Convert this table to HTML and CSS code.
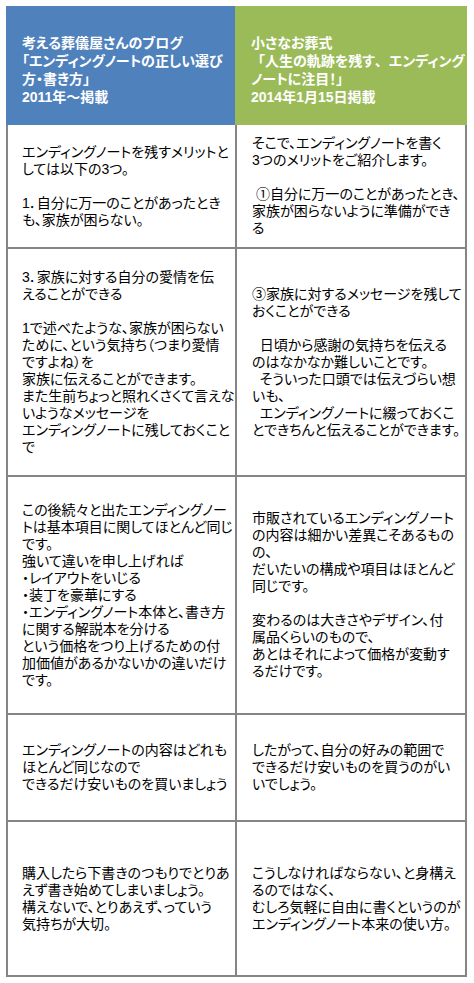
FILE: index.html
```html
<!DOCTYPE html>
<html lang="ja">
<head>
<meta charset="utf-8">
<title>エンディングノート比較</title>
<link rel="stylesheet" href="styles.css">
</head>
<body>
<table class="cmp">
  <colgroup><col class="c-left"><col class="c-right"></colgroup>
  <tr class="r-head">
    <th class="h h-blue">考える葬儀屋さんのブログ<br>「エンディングノートの正しい選び<br>方・書き方」<br>2011年～掲載</th>
    <th class="h h-green">小さなお葬式<br><span class="fw">「</span>人生の軌跡を残す<span class="fw">、</span>エンディング<br>ノートに注目！」<br>2014年1月15日掲載</th>
  </tr>
  <tr class="r1">
    <td class="b b-left">エンディングノートを残すメリットと<br>しては以下の3つ。<br><br>1．自分に万一のことがあったとき<br>も、家族が困らない。</td>
    <td class="b b-right">そこで、エンディングノートを書く<br>3つのメリットをご紹介します。<br><br>&nbsp;①自分に万一のことがあったとき、<br>家族が困らないように準備ができ<br>る</td>
  </tr>
  <tr class="r2">
    <td class="b b-left">3．家族に対する自分の愛情を伝<br>えることができる<br><br>1で述べたような、家族が困らない<br>ために、という気持ち（つまり愛情<br>ですよね）を<br>家族に伝えることができます。<br>また生前ちょっと照れくさくて言えな<br>いようなメッセージを<br>エンディングノートに残しておくこと<br>で</td>
    <td class="b b-right">③家族に対するメッセージを残して<br>おくことができる<br><br>&nbsp;&nbsp;日頃から感謝の気持ちを伝える<br>のはなかなか難しいことです。<br>&nbsp;&nbsp;そういった口頭では伝えづらい想<br>いも、<br>&nbsp;&nbsp;エンディングノートに綴っておくこ<br>とできちんと伝えることができます。</td>
  </tr>
  <tr class="r3">
    <td class="b b-left">この後続々と出たエンディングノー<br>トは基本項目に関してほとんど同じ<br>です。<br>強いて違いを申し上げれば<br>・レイアウトをいじる<br>・装丁を豪華にする<br>・エンディングノート本体と、書き方<br>に関する解説本を分ける<br>という価格をつり上げるための付<br>加価値があるかないかの違いだけ<br>です。</td>
    <td class="b b-right">市販されているエンディングノート<br>の内容は細かい差異こそあるもの<br>の、<br>だいたいの構成や項目はほとんど<br>同じです。<br><br>変わるのは大きさやデザイン、付<br>属品くらいのもので、<br>あとはそれによって価格が変動す<br>るだけです。</td>
  </tr>
  <tr class="r4">
    <td class="b b-left">エンディングノートの内容はどれも<br>ほとんど同じなので<br>できるだけ安いものを買いましょう</td>
    <td class="b b-right">したがって、自分の好みの範囲で<br>できるだけ安いものを買うのがい<br>いでしょう。</td>
  </tr>
  <tr class="r5">
    <td class="b b-left">購入したら下書きのつもりでとりあ<br>えず書き始めてしまいましょう。<br>構えないで、とりあえず、っていう<br>気持ちが大切。</td>
    <td class="b b-right">こうしなければならない、と身構え<br>るのではなく、<br>むしろ気軽に自由に書くというのが<br>エンディングノート本来の使い方。</td>
  </tr>
</table>
</body>
</html>
```

FILE: styles.css
```css
html, body {
  margin: 0;
  padding: 0;
  background: #ffffff;
}

body {
  padding: 6px 0 0 6px;
  font-family: "Liberation Sans", "Noto Sans CJK JP", sans-serif;
  font-feature-settings: "palt";
  color: #000000;
}

.cmp {
  border-collapse: separate;
  border-spacing: 0;
  table-layout: fixed;
  width: 461px;
}

.c-left { width: 229px; }
.c-right { width: 232px; }

.h {
  text-align: left;
  vertical-align: middle;
  color: #ffffff;
  font-weight: bold;
  font-size: 14px;
  line-height: 18px;
  white-space: nowrap;
  padding: 8px 0 0 16px;
  box-sizing: border-box;
}

.fw { font-feature-settings: normal; }

.h-blue { background: #4f81bd; }
.h-green { background: #9bbb59; }

.r-head { height: 119px; }
.r1 { height: 124px; }
.r2 { height: 228px; }
.r3 { height: 238px; }
.r4 { height: 107px; }
.r5 { height: 155px; }

.b {
  vertical-align: middle;
  font-size: 14px;
  line-height: 17px;
  white-space: nowrap;
  border-bottom: 2px solid #858585;
  border-left: 2px solid #858585;
  box-sizing: border-box;
  overflow: hidden;
}

.b-left { padding: 0 0 0 14px; }
.b-right {
  padding: 0 0 0 15px;
  border-right: 2px solid #858585;
}
```
